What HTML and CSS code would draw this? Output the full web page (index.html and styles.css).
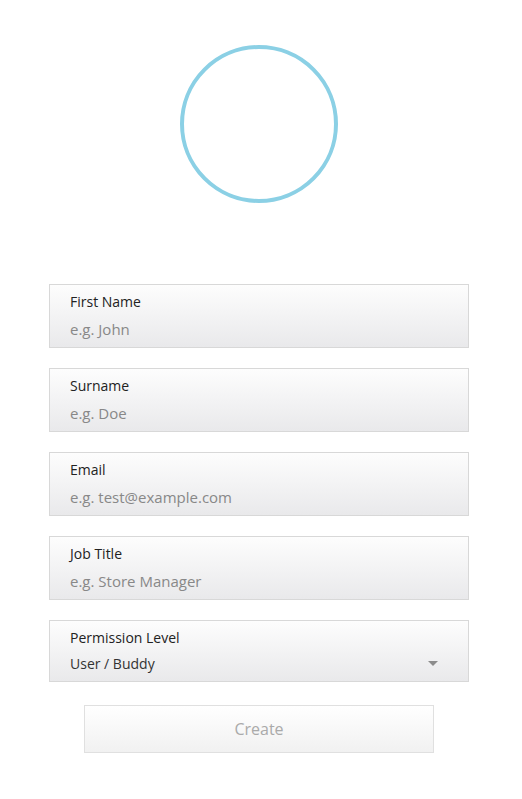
FILE: index.html
```html
<!DOCTYPE html>
<html>
<head>
<meta charset="utf-8">
<link rel="stylesheet" href="styles.css">
</head>
<body>
<main class="page">
  <div class="avatar-wrap"><div class="avatar"></div></div>
  <form class="form">
    <label class="field">
      <span class="field-label">First Name</span>
      <input class="field-input" type="text" placeholder="e.g. John">
    </label>
    <label class="field">
      <span class="field-label">Surname</span>
      <input class="field-input" type="text" placeholder="e.g. Doe">
    </label>
    <label class="field">
      <span class="field-label">Email</span>
      <input class="field-input" type="text" placeholder="e.g. test@example.com">
    </label>
    <label class="field">
      <span class="field-label">Job Title</span>
      <input class="field-input" type="text" placeholder="e.g. Store Manager">
    </label>
    <div class="field field-select">
      <span class="field-label">Permission Level</span>
      <div class="select-row">
        <span class="select-value">User / Buddy</span>
        <span class="caret"></span>
      </div>
    </div>
    <div class="actions">
      <button type="button" class="btn-create">Create</button>
    </div>
  </form>
</main>
</body>
</html>
```
FILE: styles.css
```css
html, body {
  margin: 0;
  padding: 0;
  background: #fff;
  font-family: "Open Sans", "Noto Sans", sans-serif;
}
.page {
  width: 518px;
  display: flex;
  flex-direction: column;
  align-items: center;
}
.avatar-wrap {
  padding-top: 45px;
  height: 284px;
  box-sizing: border-box;
}
.avatar {
  width: 158px;
  height: 158px;
  box-sizing: border-box;
  border: 4px solid #8bd0e5;
  border-radius: 50%;
}
.form {
  width: 420px;
  display: flex;
  flex-direction: column;
  gap: 20px;
}
.field {
  display: flex;
  flex-direction: column;
  box-sizing: border-box;
  height: 64px;
  padding: 7px 20px 0 20px;
  border: 1px solid #d8d8d8;
  background: linear-gradient(to bottom, #fdfdfd 0%, #e9e9eb 100%);
}
.field-label {
  font-size: 14px;
  line-height: 20px;
  color: #222;
}
.field-input {
  border: 0;
  outline: 0;
  background: transparent;
  padding: 0;
  margin: 0;
  height: 34px;
  font-family: inherit;
  font-size: 15px;
  color: #333;
}
.field-input::placeholder {
  color: #888;
}
.field-select {
  height: 62px;
  padding-top: 7px;
}
.select-row {
  display: flex;
  align-items: center;
  justify-content: space-between;
  height: 30px;
  padding-right: 10px;
}
.select-value {
  font-size: 14px;
  color: #333;
}
.caret {
  width: 0;
  height: 0;
  border-left: 5px solid transparent;
  border-right: 5px solid transparent;
  border-top: 5px solid #8c8c8c;
}
.actions {
  display: flex;
  justify-content: center;
  padding-top: 3px;
}
.btn-create {
  width: 350px;
  height: 48px;
  border: 1px solid #e0e0e0;
  background: linear-gradient(to bottom, #ffffff 0%, #f1f1f1 100%);
  font-family: inherit;
  font-size: 16px;
  color: #aaa;
}
```
